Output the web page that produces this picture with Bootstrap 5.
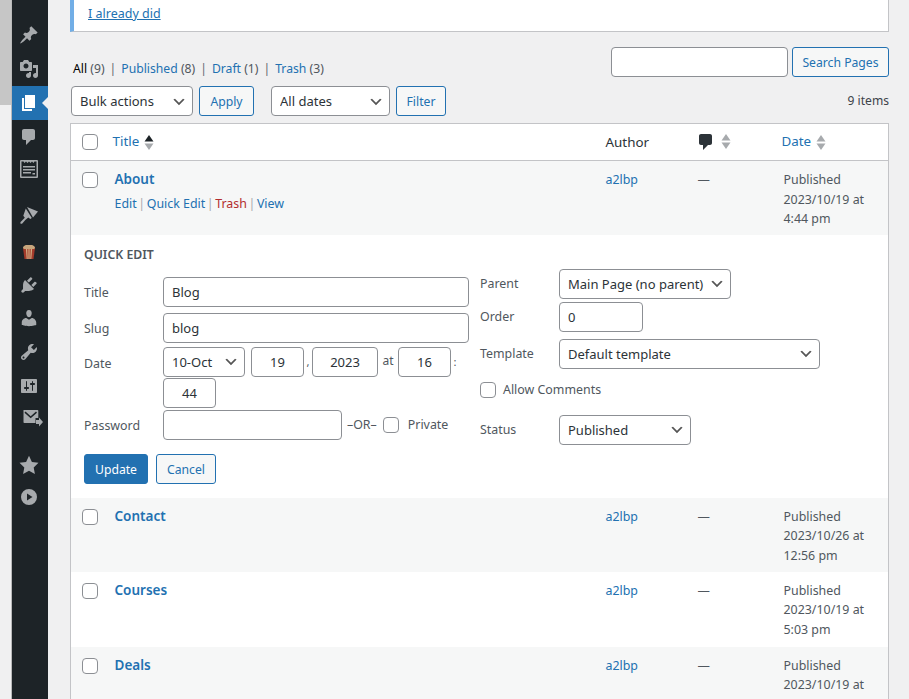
<!DOCTYPE html>
<html lang="en">
<head>
<meta charset="utf-8">
<title>Pages</title>
<link href="https://cdn.jsdelivr.net/npm/bootstrap@5.3.0/dist/css/bootstrap.min.css" rel="stylesheet">
<style>
html,body{height:100%;overflow:hidden}
body{background:#f0f0f1;color:#3c434a;font-family:"Noto Sans","Liberation Sans",sans-serif;font-size:12.4px;line-height:1.4}
a{color:#2271b1;text-decoration:none}
.shell{height:699px;overflow:hidden}
.strip{width:12px;flex:none;border-right:1px solid #b9b9ba}
.strip-thumb{height:105px;width:11px;background:#c6c6c6}
.wpmenu{width:36px;flex:none;background:#1d2327;padding-top:18px}
.slot{height:34px;color:#a7aaad;padding-right:2px}
.slot svg{width:20px;height:20px;fill:currentColor}
.slot-on{background:#2271b1;color:#fff;position:relative}
.slot-on::after{content:"";position:absolute;right:0;top:11px;border:6px solid transparent;border-right-color:#f0f0f1;border-left:0}
.slot-5{height:30px}.slot-6{margin-top:14px}.slot-7{margin-top:3px}.slot-8{height:32px}
.slot-12{height:30px;padding:0 0 0 6px}.slot-13{margin-top:16px;height:32px}.slot-14{height:32px}
.maincol{padding:0 20px 0 22px;min-width:0}
.notice-box{height:32px;background:#fff;border:1px solid #c3c4c7;border-top:0;border-left:4px solid #72aee6;padding:5px 14px 0;font-size:12.5px}
.notice-box a{text-decoration:underline}
.filters{height:76px;position:relative;margin-top:15px}
.subs{padding-left:3px;padding-top:13px;color:#646970;font-size:12.2px}
.subs b{font-weight:400;color:#000}
.subs i{font-style:normal;color:#50575e}
.subs span{margin:0 5px}
.searchline{position:absolute;top:0;right:0}
.toolrow{position:absolute;left:1px;right:0;top:39px}
.form-control.wpf,.form-select.wpf{height:30px;min-height:30px;padding:0 8px;border:1px solid #8c8f94;border-radius:4px;font-size:13px;color:#2c3338;line-height:28px;box-shadow:none}
.form-select.wpf{padding-right:24px;background-position:right 5px top 55%;background-size:16px 16px;background-image:url("data:image/svg+xml,%3Csvg xmlns='http://www.w3.org/2000/svg' viewBox='0 0 20 20'%3E%3Cpath d='M5 6l5 5 5-5 2 1-7 7-7-7z' fill='%23555'/%3E%3C/svg%3E")}
.btn.wpb{height:30px;padding:0;font-size:12.2px;line-height:29px;white-space:nowrap;color:#2271b1;background:#f6f7f7;border:1px solid #2271b1;border-radius:3px}
.btn.wpp{color:#fff;background:#2271b1;width:64px}
.btn.wpc2{width:60px}
.w-bulk{width:122px}.w-dates{width:119px;margin-left:17px}.w-search{width:177px}
.w-apply{margin-left:6px;width:55px}.w-filter{margin-left:6px;width:50px}.w-srch{width:97px}
.itemcount{position:absolute;right:0;top:46px;font-size:12.1px}
.wptable{background:#fff;border:1px solid #c3c4c7;margin:0;table-layout:fixed;width:100%;--bs-table-bg:transparent;font-size:12.4px}
.wptable>*>tr>*{padding:0;border:0;box-shadow:none;vertical-align:top;color:#50575e;background:transparent}
.wptable thead th{height:37px;border-bottom:1px solid #c3c4c7;font-weight:400;font-size:13.4px;vertical-align:middle;color:#2c3338}
.col-cb{width:42px}.col-auth{width:92px}.col-cm{width:86px}.col-date{width:105px}
.form-check-input.wpc{width:16px;height:16px;margin:0;border:1px solid #8c8f94;border-radius:4px;background-color:#fff;float:none;display:block;flex:none}
.wptable td.cbc,.wptable th.cbc{padding-left:11px}
.wptable .rowh td.cbc{padding-top:11px!important}
.rowalt{background:#f6f7f7}
.rowh td{padding-top:9px!important;line-height:19.5px}
.rowh{height:74px}
.wptable .rowlong{height:75px}
.rname{font-weight:600;font-size:13.5px;padding-left:2px;display:block}
.racts{padding:4px 0 0 2px;font-size:12.4px;color:#a7aaad}
.racts span{margin:0 1.6px}
.racts .del{color:#b32d2e}
.wptable td.qe{padding:11px 13px 0!important;height:263px;vertical-align:top}
.qe-title{font-size:12.3px;font-weight:600;color:#50575e;line-height:18px;margin-bottom:5px}
.qe-left{width:385px;padding-top:8px}
.qe-left .qlabel{padding-top:2px}
.qe-right{width:340px;margin-left:11px}
.qlabel{width:79px;flex:none;color:#50575e}
.qrow{display:flex;align-items:center;margin-bottom:6px}
.qrow-tight{margin-bottom:3px}.qrow-wide{margin-bottom:7px}.qrow-date{align-items:flex-start;margin-bottom:2px;margin-top:-2px}
.qe-left .qrow-date .qlabel{padding-top:8px}
.qrow-pw{margin:0}
.allowc{height:16px;margin:13px 0 17px;gap:7px}
.datebox{display:flex;flex-wrap:wrap;width:306px;align-items:center;row-gap:1px}
.dmon{width:82px;margin-right:6px}.dnum{width:53px;text-align:center;padding:0!important}.dyear{width:66px;text-align:center;padding:0!important}
.sep{width:8px;text-align:center;font-size:11px;color:#50575e}
.sepwide{width:20px;text-align:center;color:#50575e;font-size:12px}
.w-pass{width:179px!important;flex:none}.w-parent{width:172px!important;flex:none;padding-right:20px!important}.w-order{width:84px!important;flex:none}.w-status{width:132px!important;flex:none}
.ortext{margin:0 6px 0 5px}
.privlabel{margin-left:9px}
.qe-btns{margin-top:9px}
svg.sorter{width:10px;height:18px;display:inline-block;vertical-align:middle;margin-left:5px}
.cmic{width:20px;height:20px;fill:#2c3338;vertical-align:middle;margin-left:-2px}
.hdate{margin-left:-2px}
</style>
</head>
<body>
<div class="shell d-flex">
  <div class="strip"><div class="strip-thumb"></div></div>
  <nav class="wpmenu">
    <div class="slot d-flex align-items-center justify-content-center"><svg viewBox="0 0 20 20"><path d="M10.44 3.02l1.82-1.82 6.36 6.35-1.83 1.82c-1.05-.68-2.48-.57-3.41.36l-.75.75c-.92.93-1.04 2.35-.35 3.41l-1.83 1.82-2.41-2.41-2.8 2.79c-.42.42-3.38 2.71-3.8 2.29s1.86-3.39 2.28-3.81l2.79-2.79L4.1 9.36l1.83-1.82c1.05.69 2.48.57 3.41-.36l.75-.75c.93-.92 1.04-2.35.35-3.41z"/></svg></div>
    <div class="slot d-flex align-items-center justify-content-center"><svg viewBox="0 0 20 20"><path d="M13 11V4c0-.55-.45-1-1-1h-1.67L9 1H5L3.67 3H2c-.55 0-1 .45-1 1v7c0 .55.45 1 1 1h10c.55 0 1-.45 1-1zM7 4.500c1.38 0 2.500 1.120 2.500 2.500S8.380 9.500 7 9.500 4.500 8.380 4.500 7 5.620 4.500 7 4.500zM14 6h5v10.500c0 1.380-1.120 2.500-2.500 2.500S14 17.880 14 16.500s1.120-2.500 2.500-2.500c.17 0 .34.02.5.05V9h-3V6zm-4 8.050V13h2v3.500c0 1.380-1.120 2.500-2.500 2.500S7 17.880 7 16.500 8.120 14 9.500 14c.17 0 .34.02.5.05z"/></svg></div>
    <div class="slot slot-on d-flex align-items-center justify-content-center"><svg viewBox="0 0 20 20"><path d="M6 15V2h10v13H6zm-1 1h8v2H3V5h2v11z"/></svg></div>
    <div class="slot d-flex align-items-center justify-content-center"><svg viewBox="0 0 20 20"><path d="M5 2h9c1.100 0 2 .9 2 2v7c0 1.100-.9 2-2 2h-2l-5 5v-5H5c-1.100 0-2-.9-2-2V4c0-1.100.9-2 2-2z"/></svg></div>
    <div class="slot slot-5 d-flex align-items-center justify-content-center"><svg viewBox="0 0 20 20"><path fill-rule="evenodd" d="M2 1h16a1 1 0 0 1 1 1v16a1 1 0 0 1-1 1H2a1 1 0 0 1-1-1V2a1 1 0 0 1 1-1zm.5 1.500v15h15v-15h-2l-1 1.500-1.500-1.500-1.500 1.500L10 2.500 8.500 4 7 2.500 5.500 4l-1-1.500zM4 7h12v1.500H4zm0 3h12v1.500H4zm0 3h8v1.500H4zm9.500 1H16v1.500h-2.500z"/></svg></div>
    <div class="slot slot-6 d-flex align-items-center justify-content-center"><svg viewBox="0 0 20 20"><path d="M8 2l11 4.500-5 6z"/><path d="M6.800 3.500l6 9.500-1.500 1-2-1.500-3 2.500-3 3.500c-.8.8-2.200.2-2-.8s2.500-3 4.500-5l-1.500-2z"/></svg></div>
    <div class="slot slot-7 d-flex align-items-center justify-content-center"><svg viewBox="0 0 20 20"><path fill="#a33a2a" d="M4 6h12l-1.500 11h-9z"/><path fill="#d1ad84" d="M6.800 6h1.400l.5 11H7.700zm5 0h1.400l-.9 11h-1zM9.400 6h1.200v11H9.400z"/><path fill="#c7a57c" d="M4 6c0-1.500 1-1.700 1.500-2.200C6.300 3 7.500 3 10 3s3.700 0 4.500.8c.5.5 1.500.7 1.500 2.200l-1 1H5z"/></svg></div>
    <div class="slot slot-8 d-flex align-items-center justify-content-center"><svg viewBox="0 0 20 20"><path d="M13.110 4.360L9.870 7.600 8 5.730l3.240-3.240c.35-.34 1.050-.2 1.560.32.52.51.66 1.210.31 1.550zm-8 1.770l.91-1.120 9.010 9.010-1.190.84c-.71.71-2.630 1.160-3.820 1.160H6.140L4.900 17.260c-.59.59-1.540.59-2.120 0-.59-.58-.59-1.530 0-2.120l1.240-1.240v-3.880c0-1.130.4-3.190 1.090-3.890zm7.260 3.970l3.240-3.240c.34-.35 1.040-.21 1.550.31.52.51.66 1.210.31 1.550l-3.240 3.250z"/></svg></div>
    <div class="slot d-flex align-items-center justify-content-center"><svg viewBox="0 0 20 20"><path d="M10 9.250c-2.270 0-2.730-3.440-2.730-3.440C7 4.020 7.820 2 9.970 2c2.160 0 2.980 2.020 2.710 3.810 0 0-.41 3.440-2.680 3.440zm0 2.570L12.720 10c2.390 0 4.520 2.330 4.520 4.530v2.490s-3.650 1.130-7.240 1.130c-3.650 0-7.240-1.130-7.240-1.130v-2.490c0-2.250 1.940-4.480 4.470-4.480z"/></svg></div>
    <div class="slot d-flex align-items-center justify-content-center"><svg viewBox="0 0 20 20"><path d="M16.680 9.770c-1.340 1.340-3.300 1.670-4.950.99l-5.410 6.520c-.99.99-2.590.99-3.580 0s-.99-2.590 0-3.570l6.520-5.420c-.68-1.650-.35-3.610.99-4.950 1.280-1.280 3.120-1.620 4.720-1.060l-2.890 2.890 2.820 2.820 2.860-2.870c.53 1.580.18 3.390-1.080 4.650zM3.810 16.210c.4.39 1.040.39 1.430 0 .4-.4.4-1.040 0-1.430-.39-.4-1.030-.4-1.430 0-.39.39-.39 1.030 0 1.430z"/></svg></div>
    <div class="slot d-flex align-items-center justify-content-center"><svg viewBox="0 0 20 20"><path d="M18 16V4c0-.55-.45-1-1-1H3c-.55 0-1 .45-1 1v12c0 .55.45 1 1 1h14c.55 0 1-.45 1-1zM8 11h1c.55 0 1 .45 1 1s-.45 1-1 1H8v1.500c0 .28-.22.5-.5.5s-.5-.22-.5-.5V13H6c-.55 0-1-.45-1-1s.45-1 1-1h1V5.500c0-.28.22-.5.5-.5s.5.22.5.5V11zm5-2h-1c-.55 0-1-.45-1-1s.45-1 1-1h1V5.500c0-.28.22-.5.5-.5s.5.22.5.5V7h1c.55 0 1 .45 1 1s-.45 1-1 1h-1v5.500c0 .28-.22.5-.5.5s-.5-.22-.5-.5V9z"/></svg></div>
    <div class="slot slot-12 d-flex align-items-center justify-content-center"><svg viewBox="0 0 20 20"><path fill-rule="evenodd" d="M.5 2h14a.8.8 0 0 1 .8.8V10h-2.800v5H1.300a.8.8 0 0 1-.8-.8zm2 1.500 5.200 4.700 5.300-4.700 1 1.200-6.300 5.500-6.200-5.500z"/><path d="M13 12h3V9.500l4 4.500-4 4.500V16h-3z"/></svg></div>
    <div class="slot slot-13 d-flex align-items-center justify-content-center"><svg viewBox="0 0 20 20"><path d="M10 .8l2.900 6.100 6.600.9-4.800 4.600 1.200 6.600L10 15.800 4.100 19l1.200-6.600L.5 7.800l6.600-.9z"/></svg></div>
    <div class="slot slot-14 d-flex align-items-center justify-content-center"><svg viewBox="0 0 20 20"><path fill-rule="evenodd" d="M10 2a8 8 0 1 1 0 16 8 8 0 0 1 0-16zM8 6.500v7l5.500-3.500z"/></svg></div>
  </nav>
  <main class="maincol flex-grow-1">
    <div class="notice-box"><a href="#">I already did</a></div>
    <div class="filters">
      <div class="subs"><b>All</b> <i>(9)</i><span>|</span><a href="#">Published <i>(8)</i></a><span>|</span><a href="#">Draft <i>(1)</i></a><span>|</span><a href="#">Trash <i>(3)</i></a></div>
      <div class="searchline d-flex">
        <input class="form-control wpf w-search me-1" type="search" aria-label="Search">
        <button class="btn wpb w-srch">Search Pages</button>
      </div>
      <div class="toolrow d-flex">
        <select class="form-select wpf w-bulk" aria-label="Bulk"><option>Bulk actions</option></select>
        <button class="btn wpb w-apply">Apply</button>
        <select class="form-select wpf w-dates" aria-label="Dates"><option>All dates</option></select>
        <button class="btn wpb w-filter">Filter</button>
      </div>
      <div class="itemcount">9 items</div>
    </div>
    <table class="table wptable">
      <colgroup><col class="col-cb"><col><col class="col-auth"><col class="col-cm"><col class="col-date"></colgroup>
      <thead>
        <tr>
          <th class="cbc"><input class="form-check-input wpc" type="checkbox" aria-label="All"></th>
          <th><a href="#">Title</a><svg class="sorter" viewBox="0 0 10 18"><path fill="#1d2327" d="M5 1l4.500 6.500h-9z"/><path fill="#a7aaad" d="M5 16l-4.500-6.500h9z"/></svg></th>
          <th>Author</th>
          <th><svg class="cmic" viewBox="0 0 20 20"><path d="M5 2h9c1.100 0 2 .9 2 2v7c0 1.100-.9 2-2 2h-2l-5 5v-5H5c-1.100 0-2-.9-2-2V4c0-1.100.9-2 2-2z"/></svg><svg class="sorter" viewBox="0 0 10 18"><path fill="#a7aaad" d="M5 1l4.500 6.500h-9z"/><path fill="#a7aaad" d="M5 16l-4.500-6.500h9z"/></svg></th>
          <th><a class="hdate" href="#">Date</a><svg class="sorter" viewBox="0 0 10 18"><path fill="#a7aaad" d="M5 1l4.500 6.500h-9z"/><path fill="#a7aaad" d="M5 16l-4.500-6.500h9z"/></svg></th>
        </tr>
      </thead>
      <tbody>
        <tr class="rowalt rowh">
          <td class="cbc"><input class="form-check-input wpc" type="checkbox" aria-label="About"></td>
          <td><a class="rname" href="#">About</a><div class="racts"><a href="#">Edit</a><span>|</span><a href="#">Quick Edit</a><span>|</span><a class="del" href="#">Trash</a><span>|</span><a href="#">View</a></div></td>
          <td><a href="#">a2lbp</a></td><td>—</td><td>Published<br>2023/10/19 at<br>4:44 pm</td>
        </tr>
        <tr>
          <td colspan="5" class="qe">
            <div class="qe-title">QUICK EDIT</div>
            <div class="d-flex">
              <div class="qe-left">
                <div class="qrow"><span class="qlabel">Title</span><input class="form-control wpf" value="Blog" aria-label="Title"></div>
                <div class="qrow"><span class="qlabel">Slug</span><input class="form-control wpf" value="blog" aria-label="Slug"></div>
                <div class="qrow qrow-date"><span class="qlabel">Date</span>
                  <div class="datebox">
                    <select class="form-select wpf dmon" aria-label="Month"><option>10-Oct</option></select>
                    <input class="form-control wpf dnum" value="19" aria-label="Day"><span class="sep">,</span>
                    <input class="form-control wpf dyear" value="2023" aria-label="Year"><span class="sepwide">at</span>
                    <input class="form-control wpf dnum" value="16" aria-label="Hour"><span class="sep">:</span>
                    <input class="form-control wpf dnum" value="44" aria-label="Minute">
                  </div>
                </div>
                <div class="qrow qrow-pw"><span class="qlabel">Password</span><input class="form-control wpf w-pass" aria-label="Password">
                  <span class="ortext text-nowrap">–OR–</span><input class="form-check-input wpc" type="checkbox" aria-label="Private"><span class="privlabel">Private</span></div>
              </div>
              <div class="qe-right">
                <div class="qrow qrow-tight"><span class="qlabel">Parent</span><select class="form-select wpf w-parent" aria-label="Parent"><option>Main Page (no parent)</option></select></div>
                <div class="qrow qrow-wide"><span class="qlabel">Order</span><input class="form-control wpf w-order" value="0" aria-label="Order"></div>
                <div class="qrow m-0"><span class="qlabel">Template</span><select class="form-select wpf" aria-label="Template"><option>Default template</option></select></div>
                <div class="d-flex align-items-center allowc"><input class="form-check-input wpc" type="checkbox" aria-label="Allow"><span>Allow Comments</span></div>
                <div class="qrow m-0"><span class="qlabel">Status</span><select class="form-select wpf w-status" aria-label="Status"><option>Published</option></select></div>
              </div>
            </div>
            <div class="d-flex gap-2 qe-btns"><button class="btn wpb wpp">Update</button><button class="btn wpb wpc2">Cancel</button></div>
          </td>
        </tr>
        <tr class="rowalt rowh">
          <td class="cbc"><input class="form-check-input wpc" type="checkbox" aria-label="Contact"></td>
          <td><a class="rname" href="#">Contact</a></td>
          <td><a href="#">a2lbp</a></td><td>—</td><td>Published<br>2023/10/26 at<br>12:56 pm</td>
        </tr>
        <tr class="rowh rowlong">
          <td class="cbc"><input class="form-check-input wpc" type="checkbox" aria-label="Courses"></td>
          <td><a class="rname" href="#">Courses</a></td>
          <td><a href="#">a2lbp</a></td><td>—</td><td>Published<br>2023/10/19 at<br>5:03 pm</td>
        </tr>
        <tr class="rowalt rowh">
          <td class="cbc"><input class="form-check-input wpc" type="checkbox" aria-label="Deals"></td>
          <td><a class="rname" href="#">Deals</a></td>
          <td><a href="#">a2lbp</a></td><td>—</td><td>Published<br>2023/10/19 at</td>
        </tr>
      </tbody>
    </table>
  </main>
</div>
<script src="https://cdn.jsdelivr.net/npm/bootstrap@5.3.0/dist/js/bootstrap.bundle.min.js"></script>
</body>
</html>
